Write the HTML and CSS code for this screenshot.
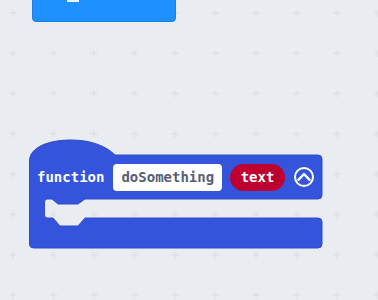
FILE: index.html
```html
<!DOCTYPE html>
<html>
<head>
<meta charset="utf-8">
<link rel="stylesheet" href="styles.css">
</head>
<body>
<div class="workspace">
  <svg class="grid" width="378" height="300" aria-hidden="true">
    <defs>
      <pattern id="cross" x="9" y="9" width="40.5" height="40.3" patternUnits="userSpaceOnUse">
        <path d="M0.5 4H7.5M4 0.5V7.5" stroke="#d9dce0" stroke-width="1"/>
      </pattern>
    </defs>
    <rect width="378" height="300" fill="url(#cross)"/>
  </svg>

  <div class="block-basic">
    <span class="basic-mark"></span>
  </div>

  <div class="block-func">
    <svg class="func-shape" width="296" height="112" viewBox="0 0 296 112" aria-hidden="true">
      <path d="M0.5 22 C0.5 8 20 1 42 1 C62 1 77 7 86 16 L289 16 A4 4 0 0 1 293 20 L293 56 A4 4 0 0 1 289 60 L56 60 L49 65 L29 65 L23 60 L18.5 60 Q15.5 60 15.5 63 L15.5 76 Q15.5 79 18.5 79 L24 79 L31 87 L49 87 L56 79 L289 79 A4 4 0 0 1 293 83 L293 105 A4 4 0 0 1 289 109 L4.5 109 A4 4 0 0 1 0.5 105 Z" fill="#3455db" stroke="#2f4ec8" stroke-width="1"/>
    </svg>
    <div class="func-head">
      <span class="kw">function</span>
      <span class="name-field">doSomething</span>
      <span class="arg-pill">text</span>
      <svg class="collapse" width="20" height="20" viewBox="0 0 20 20" aria-hidden="true">
        <circle cx="10" cy="10" r="9" fill="none" stroke="#ffffff" stroke-width="2"/>
        <polyline points="4.5,12.8 10,7 15.5,12.8" fill="none" stroke="#ffffff" stroke-width="2.4" stroke-linecap="round" stroke-linejoin="round"/>
      </svg>
    </div>
  </div>
</div>
</body>
</html>
```

FILE: styles.css
```css
html, body {
  margin: 0;
  padding: 0;
}
body {
  background: #e9ecf0;
  font-family: "DejaVu Sans Mono", "Liberation Mono", monospace;
}
.workspace {
  position: relative;
  width: 378px;
  height: 300px;
  overflow: hidden;
  background: #e9ecf0;
}
.grid {
  position: absolute;
  left: 0;
  top: 0;
}
.block-basic {
  position: absolute;
  left: 32px;
  top: -30px;
  width: 144px;
  height: 52px;
  box-sizing: border-box;
  background: #1e90ff;
  border: 1px solid #1a7fe6;
  border-radius: 4px;
  display: flex;
  align-items: flex-start;
  padding: 29px 0 0 34px;
}
.basic-mark {
  display: block;
  width: 12px;
  height: 2px;
  background: #ffffff;
  opacity: 0.9;
}
.block-func {
  position: absolute;
  left: 29px;
  top: 139px;
  width: 296px;
  height: 112px;
}
.func-shape {
  position: absolute;
  left: 0;
  top: 0;
}
.func-head {
  position: relative;
  margin-top: 16px;
  height: 44px;
  padding-left: 8px;
  display: flex;
  align-items: center;
  gap: 8px;
  font-weight: bold;
  font-size: 14px;
}
.kw {
  color: #ffffff;
  margin-right: 1px;
}
.name-field {
  background: #ffffff;
  color: #575e75;
  border-radius: 4px;
  height: 27px;
  line-height: 27px;
  padding: 0 8px;
}
.arg-pill {
  background: #bd0030;
  color: #ffffff;
  height: 27px;
  line-height: 27px;
  padding: 0 10.5px;
  border-radius: 14px;
}
.collapse {
  margin-left: 1px;
}
```
